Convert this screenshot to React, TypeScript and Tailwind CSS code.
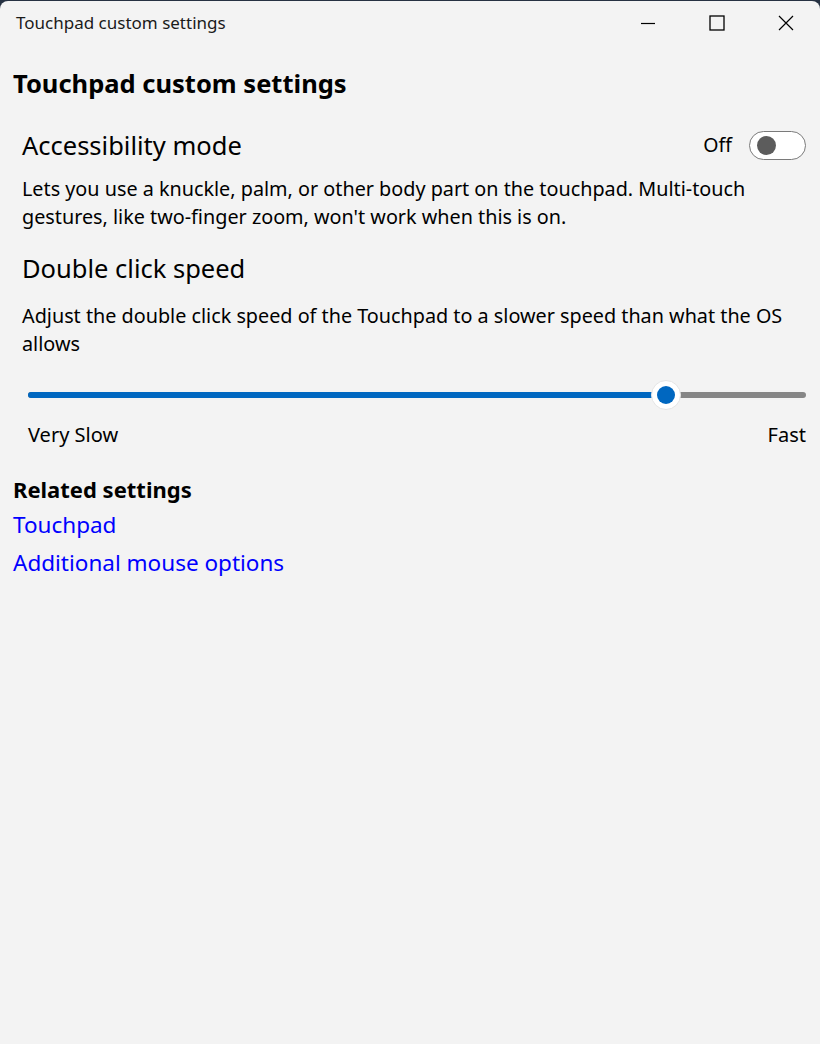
import React from 'react';

function Toggle() {
  return (
    <div className="w-[57px] h-[29px] rounded-full border-[1.5px] border-[#7a7a7a] bg-white flex items-center pl-[7px]">
      <div className="w-[19px] h-[19px] rounded-full bg-[#5c5c5c]" />
    </div>
  );
}

function Slider({ value }: { value: number }) {
  return (
    <div className="relative h-[30px] flex items-center">
      <div className="w-full h-[6px] rounded-full bg-[#868686] flex">
        <div className="h-full rounded-full bg-[#0067c0]" style={{ width: `${value}%` }} />
      </div>
      <div
        className="absolute top-0 w-[30px] h-[30px] -ml-[15px] rounded-full bg-white border border-[#e5e5e5] flex items-center justify-center"
        style={{ left: `${value}%` }}
      >
        <div className="w-[18px] h-[18px] rounded-full bg-[#0067c0]" />
      </div>
    </div>
  );
}

export default function App() {
  return (
    <div className="min-h-screen bg-[#263142] pt-[1px]" style={{ fontFamily: '"Noto Sans", sans-serif' }}>
      <div className="min-h-[1043px] bg-[#f3f3f3] rounded-t-[8px] text-[#000]">
        {/* title bar */}
        <div className="h-[44px] flex items-center justify-between pl-[16px]">
          <span className="text-[17px] text-[#1a1a1a] leading-[24px]">Touchpad custom settings</span>
          <div className="flex items-center h-full">
            <div className="w-[69px] h-full flex items-center justify-center">
              <svg width="16" height="16" viewBox="0 0 16 16"><path d="M1 8.5h14" stroke="#000" strokeWidth="1.2" /></svg>
            </div>
            <div className="w-[69px] h-full flex items-center justify-center">
              <svg width="16" height="16" viewBox="0 0 16 16"><rect x="1" y="1" width="14" height="14" fill="none" stroke="#000" strokeWidth="1.3" /></svg>
            </div>
            <div className="w-[69px] h-full flex items-center justify-center">
              <svg width="16" height="16" viewBox="0 0 16 16"><path d="M1 1l14 14M15 1L1 15" stroke="#000" strokeWidth="1.2" /></svg>
            </div>
          </div>
        </div>

        <div className="pl-[13px] pr-[14px]">
          <h1 className="text-[25.5px] font-bold leading-[34px] mt-[21px]">Touchpad custom settings</h1>

          <div className="pl-[9px] mt-[28px]">
            <div className="flex items-center justify-between">
              <span className="text-[25.5px] leading-[34px]">Accessibility mode</span>
              <div className="flex items-center gap-[17px]">
                <span className="text-[19.5px]">Off</span>
                <Toggle />
              </div>
            </div>
            <p className="text-[19.8px] leading-[28px] mt-[13px]">
              Lets you use a knuckle, palm, or other body part on the touchpad. Multi-touch gestures, like two-finger zoom, won't work when this is on.
            </p>

            <div className="text-[25.5px] leading-[34px] mt-[20px]">Double click speed</div>
            <p className="text-[19.8px] leading-[28px] mt-[17px]">
              Adjust the double click speed of the Touchpad to a slower speed than what the OS allows
            </p>

            <div className="pl-[6px] mt-[22px]">
              <Slider value={82} />
              <div className="flex justify-between text-[20px] leading-[28px] mt-[11px]">
                <span>Very Slow</span>
                <span>Fast</span>
              </div>
            </div>
          </div>

          <div className="mt-[26px] text-[22px] font-bold leading-[28px]">Related settings</div>
          <div className="flex flex-col text-[22.5px] text-[#0000ff] leading-[30px] mt-[7px] gap-[8px] items-start">
            <a>Touchpad</a>
            <a>Additional mouse options</a>
          </div>
        </div>
      </div>
    </div>
  );
}
